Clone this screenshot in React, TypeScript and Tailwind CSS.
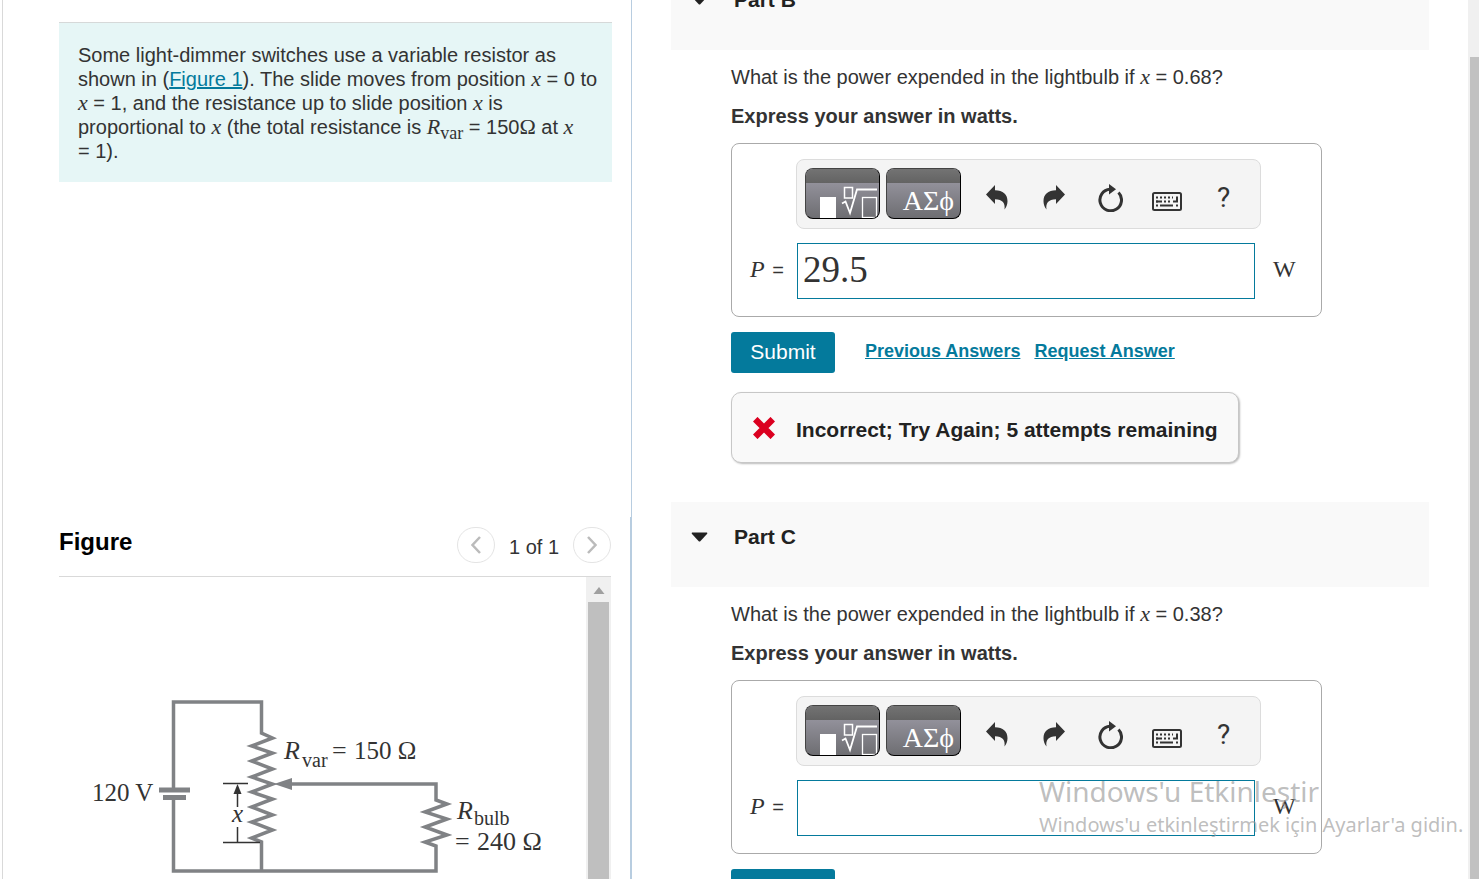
import React, { useState } from 'react';

const MathVar: React.FC<{ children: React.ReactNode }> = ({ children }) => (
  <i className="font-['Liberation_Serif',serif] text-[22px] leading-none">{children}</i>
);

const UndoIcon: React.FC<{ className?: string }> = ({ className }) => (
  <svg width="22" height="25" viewBox="0 0 22 25" fill="currentColor" className={className} aria-hidden="true">
    <path d="M0 9.500 9 0v5.200c8 .2 12.500 4 12.500 11 0 3-1.200 6-3 8.300 .9-6.500-1.800-10-9.500-10.300V19z" />
  </svg>
);

const ResetIcon: React.FC = () => (
  <svg width="26" height="28" viewBox="0 0 26 28" aria-hidden="true">
    <path d="M21.500 8.500A10.800 10.800 0 1 1 13 5.200" fill="none" stroke="currentColor" strokeWidth="3" />
    <path d="M12 0 19 5.300 12 10.500z" fill="currentColor" />
  </svg>
);

const KeyboardIcon: React.FC = () => (
  <svg width="30" height="19" viewBox="0 0 30 19" fill="none" stroke="currentColor" aria-hidden="true">
    <rect x="1" y="1" width="28" height="17" rx="1.500" strokeWidth="2" />
    <path d="M4 5.500h17M4 9.500h15" strokeWidth="2" strokeDasharray="2 2" />
    <path d="M4 9.500h4M4 13.500h2M8 13.500h13M24 13.500h2" strokeWidth="2" />
    <path d="M25 4.500v5h-4" strokeWidth="2" />
  </svg>
);

const TemplateIcon: React.FC = () => (
  <svg width="60" height="34" viewBox="0 0 60 34" fill="none" stroke="white" aria-hidden="true">
    <rect x="1" y="12" width="16" height="22" fill="white" stroke="none" />
    <rect x="25.500" y="2.500" width="8" height="10.500" strokeWidth="1.500" />
    <path d="M23 18.500l3.500-2 4.500 11.500 7-23.500h20" strokeWidth="1.800" />
    <rect x="43.500" y="12.500" width="14" height="20" strokeWidth="1.300" />
  </svg>
);

const toolButton =
  'h-[51px] w-[75px] shrink-0 overflow-hidden rounded-lg border border-t-[#444] border-l-[#444] border-r-black border-b-black bg-linear-to-b from-[#a19fab] to-[#6e6e72] text-white';
const iconButton = 'flex h-[51px] w-[57px] items-center justify-center text-[#333]';

const Toolbar: React.FC = () => (
  <div className="flex h-[70px] items-start rounded-lg border border-[#dcdcdc] bg-[#f4f4f4] px-2 pt-2" role="toolbar">
    <button className={toolButton} aria-label="Templates">
      <div className="h-[14px] bg-linear-to-b from-[#737373] to-[#636363]" />
      <div className="flex h-9 justify-end pt-[2px]">
        <TemplateIcon />
      </div>
    </button>
    <button className={`${toolButton} ml-[6px]`} aria-label="Symbols">
      <div className="h-[14px] bg-linear-to-b from-[#737373] to-[#636363]" />
      <div className="h-9 pr-1.5 text-right font-['Liberation_Serif',serif] text-[28px] leading-9">ΑΣϕ</div>
    </button>
    <button className={`${iconButton} ml-2 pt-2`} aria-label="Undo">
      <UndoIcon />
    </button>
    <button className={`${iconButton} pt-2`} aria-label="Redo">
      <UndoIcon className="-scale-x-100" />
    </button>
    <button className={`${iconButton} pt-2`} aria-label="Reset">
      <ResetIcon />
    </button>
    <button className={`${iconButton} pt-4`} aria-label="Keyboard shortcuts">
      <KeyboardIcon />
    </button>
    <button className={`${iconButton} pt-2 font-['Roboto',sans-serif] text-[28px]`} aria-label="Help">
      ?
    </button>
  </div>
);

interface PartProps {
  name: string;
  x: string;
  initial: string;
  feedback?: string;
}

const Part: React.FC<PartProps> = ({ name, x, initial, feedback }) => {
  const [answer, setAnswer] = useState(initial);
  const inputId = `answer-${name}`;

  return (
    <section>
      <h2 className="bg-[#f9f9f9] text-[21px] font-bold text-[#222]">
        <button className="flex h-[85px] w-full items-start pt-[23px] pl-5 leading-6">
          <svg width="17" height="10" viewBox="0 0 17 10" className="mt-[7px] mr-[26px]" aria-hidden="true">
            <path d="M1 .5h15q.8.500 0 1.500L9.500 9q-1 1-2 0L1 2Q.2 1 1 .5z" fill="#222" />
          </svg>
          Part {name}
        </button>
      </h2>

      <div className="pr-[107px] pl-[60px] text-[#333]">
        <p className="pt-[15px] text-[20px] leading-6">
          What is the power expended in the lightbulb if <MathVar>x</MathVar> = {x}?
        </p>
        <p className="pt-[15px] text-[20px] leading-6 font-bold">Express your answer in watts.</p>

        <div className="mt-[15px] flex h-[174px] rounded-lg border border-[#aaa] pt-[15px]">
          <label htmlFor={inputId} className="w-16 shrink-0 pt-[98px] pl-[18px] text-[20px] leading-6">
            <span className="mr-[2px] font-['Liberation_Serif',serif] text-[24px] italic">P</span> =
          </label>
          <div className="min-w-0 flex-1">
            <Toolbar />
            <input
              id={inputId}
              value={answer}
              onChange={(e) => setAnswer(e.target.value)}
              className="mt-[14px] ml-px block h-14 w-[calc(100%-7px)] border border-[#047a9c] bg-white px-[5px] pb-1 font-['Liberation_Serif',serif] text-[37px]"
            />
          </div>
          <span className="w-[60px] shrink-0 pt-[98px] pl-3 font-['Liberation_Serif',serif] text-[24px] leading-6">W</span>
        </div>

        <div className="mt-[15px] flex items-center">
          <button className="h-[41px] w-[104px] rounded-[3px] bg-[#047a9c] pb-[2px] text-[21px] text-white">Submit</button>
          <a href="#previous" className="ml-[30px] pb-[2px] text-[18px] font-bold text-[#047a9c] underline">Previous Answers</a>
          <a href="#request" className="ml-[14px] pb-[2px] text-[18px] font-bold text-[#047a9c] underline">Request Answer</a>
        </div>

        {feedback && (
          <div className="mt-[19px] mb-[39px] flex h-[71px] w-fit items-center rounded-[10px] border border-[#c7c7c7] bg-[#f9f9f9] pr-5 pl-[21px] text-[21px] font-bold text-[#222] shadow-[1px_1px_2px_#bbb]">
            <svg width="22" height="22" viewBox="0 0 22 22" className="mr-[21px]" aria-hidden="true">
              <path d="M4.500 4.500l13 13M17.500 4.500l-13 13" stroke="#db0020" strokeWidth="6.500" strokeLinecap="square" />
            </svg>
            <span className="pt-1">{feedback}</span>
          </div>
        )}
      </div>
    </section>
  );
};

const Circuit: React.FC = () => (
  <svg width="528" height="302" viewBox="0 0 528 302" className="block shrink-0 font-['Liberation_Serif',serif]" fill="#333" role="img" aria-label="Circuit diagram">
    <g fill="none" stroke="#808285" strokeWidth="3.500">
      <path d="M114.500 213V125h88v31l11 5-21 8 21 7-21 8 21 8-21 8 21 7-21 8 21 7-21 8 21 8-21 7 21 8-21 8 10 4v29" />
      <path d="M114.500 220v74H377v-25l-11-4 22-7-22-8 22-8-22-7 22-8-11-4v-16H231" />
      <path d="M100 213h31M104 220.500h23" strokeWidth="5" />
    </g>
    <path d="M215 207l18-6v12z" fill="#808285" />
    <path d="M164 206.500h25M164 265.500h37M178.500 210v20M178.500 250v15" stroke="#333" strokeWidth="1.500" />
    <path d="M178.500 207l4 10h-8z" />
    <text x="173" y="245" fontSize="25" fontStyle="italic">x</text>
    <text x="33" y="224" fontSize="25">120 V</text>
    <text x="225" y="182" fontSize="26" fontStyle="italic">R</text>
    <text x="243" y="190" fontSize="20">var</text>
    <text x="273" y="182" fontSize="26">=</text>
    <text x="295" y="182" fontSize="25">150 Ω</text>
    <text x="398" y="242" fontSize="26" fontStyle="italic">R</text>
    <text x="415" y="248" fontSize="20">bulb</text>
    <text x="396" y="273" fontSize="26">=</text>
    <text x="418" y="273" fontSize="26">240 Ω</text>
  </svg>
);

const Problem: React.FC = () => (
  <div className="mt-[22px] mr-[19px] ml-14 border-t border-[#d6d9d9] bg-[#e6f6f6] pt-5 pr-2 pb-[19px] pl-[19px] text-[20px] leading-6 text-[#333]">
    Some light-dimmer switches use a variable resistor as shown in (
    <a href="#figure" className="text-[#047a9c] underline">Figure 1</a>
    ). The slide moves from position <MathVar>x</MathVar> = 0 to <MathVar>x</MathVar> = 1, and the resistance up to slide
    position <MathVar>x</MathVar> is proportional to <MathVar>x</MathVar> (the total resistance is <MathVar>R</MathVar>
    <sub className="font-['Liberation_Serif',serif] text-[18px]">var</sub> = 150
    <span className="font-['Liberation_Serif',serif] text-[22px] leading-none">Ω</span> at <MathVar>x</MathVar>{' '}
    <span className="whitespace-nowrap">= 1).</span>
  </div>
);

const pagerButton = 'flex h-[36px] w-[38px] items-center justify-center rounded-full border border-[#e4e4e4]';

const Figure: React.FC = () => (
  <div id="figure" className="mr-[19px] ml-14 flex h-full flex-col">
    <div className="flex h-[60px] shrink-0 border-b border-[#d9d9d9]">
      <h2 className="flex-1 pt-[13px] text-[24px] leading-6 font-bold text-black">Figure</h2>
      <div className="flex items-start pt-[10px]">
        <button className={pagerButton} aria-label="Previous figure">
          <svg width="10" height="18" viewBox="0 0 10 18" fill="none" stroke="#bbb" strokeWidth="2.500">
            <path d="M9 1 1.500 9 9 17" />
          </svg>
        </button>
        <span className="w-[78px] pt-[8px] text-center text-[20px] leading-6 text-[#333]">1 of 1</span>
        <button className={pagerButton} aria-label="Next figure">
          <svg width="10" height="18" viewBox="0 0 10 18" fill="none" stroke="#bbb" strokeWidth="2.500">
            <path d="M1 1l7.500 8L1 17" />
          </svg>
        </button>
      </div>
    </div>
    <div className="flex min-h-0 flex-1">
      <div className="min-w-0 flex-1 overflow-hidden">
        <Circuit />
      </div>
      <div className="flex w-[25px] shrink-0 flex-col items-center bg-[#f0f0f0]">
        <svg width="12" height="25" viewBox="0 0 12 25" className="shrink-0" aria-hidden="true">
          <path d="M6 10l5.500 7H.5z" fill="#a0a0a0" />
        </svg>
        <div className="w-[21px] flex-1 bg-[#bfbfbf]" />
      </div>
    </div>
  </div>
);

const App: React.FC = () => {
  return (
    <div className="relative grid h-screen grid-cols-[632fr_847fr] overflow-hidden bg-white font-['Liberation_Sans',Arial,sans-serif]">
      <aside className="ml-[2px] grid min-h-0 min-w-0 grid-rows-[517fr_362fr] border-l border-[#d9d9d9]">
        <div className="min-h-0 overflow-hidden border-r border-[#b8cde0]">
          <Problem />
        </div>
        <div className="min-h-0 overflow-hidden border-r-2 border-[#b8cde0]">
          <Figure />
        </div>
      </aside>

      <div className="flex min-h-0 min-w-0">
        <main className="min-w-0 flex-1 overflow-hidden px-[39px]">
          <div className="-mt-[35px]">
            <Part name="B" x="0.68" initial="29.5" feedback="Incorrect; Try Again; 5 attempts remaining" />
            <Part name="C" x="0.38" initial="" />
          </div>
        </main>
        <div className="w-[11px] shrink-0 bg-[#f0f0f0] pt-[57px] pl-[2px]">
          <div className="h-full bg-[#c1c1c1]" />
        </div>
      </div>

      <div className="pointer-events-none absolute right-2 bottom-[38px] w-[432px] font-['Noto_Sans','Open_Sans',sans-serif] whitespace-nowrap text-[#999]/65">
        <p className="text-[28px] leading-9">Windows'u Etkinleştir</p>
        <p className="text-[20px] leading-8">Windows'u etkinleştirmek için Ayarlar'a gidin.</p>
      </div>
    </div>
  );
};

export default App;
